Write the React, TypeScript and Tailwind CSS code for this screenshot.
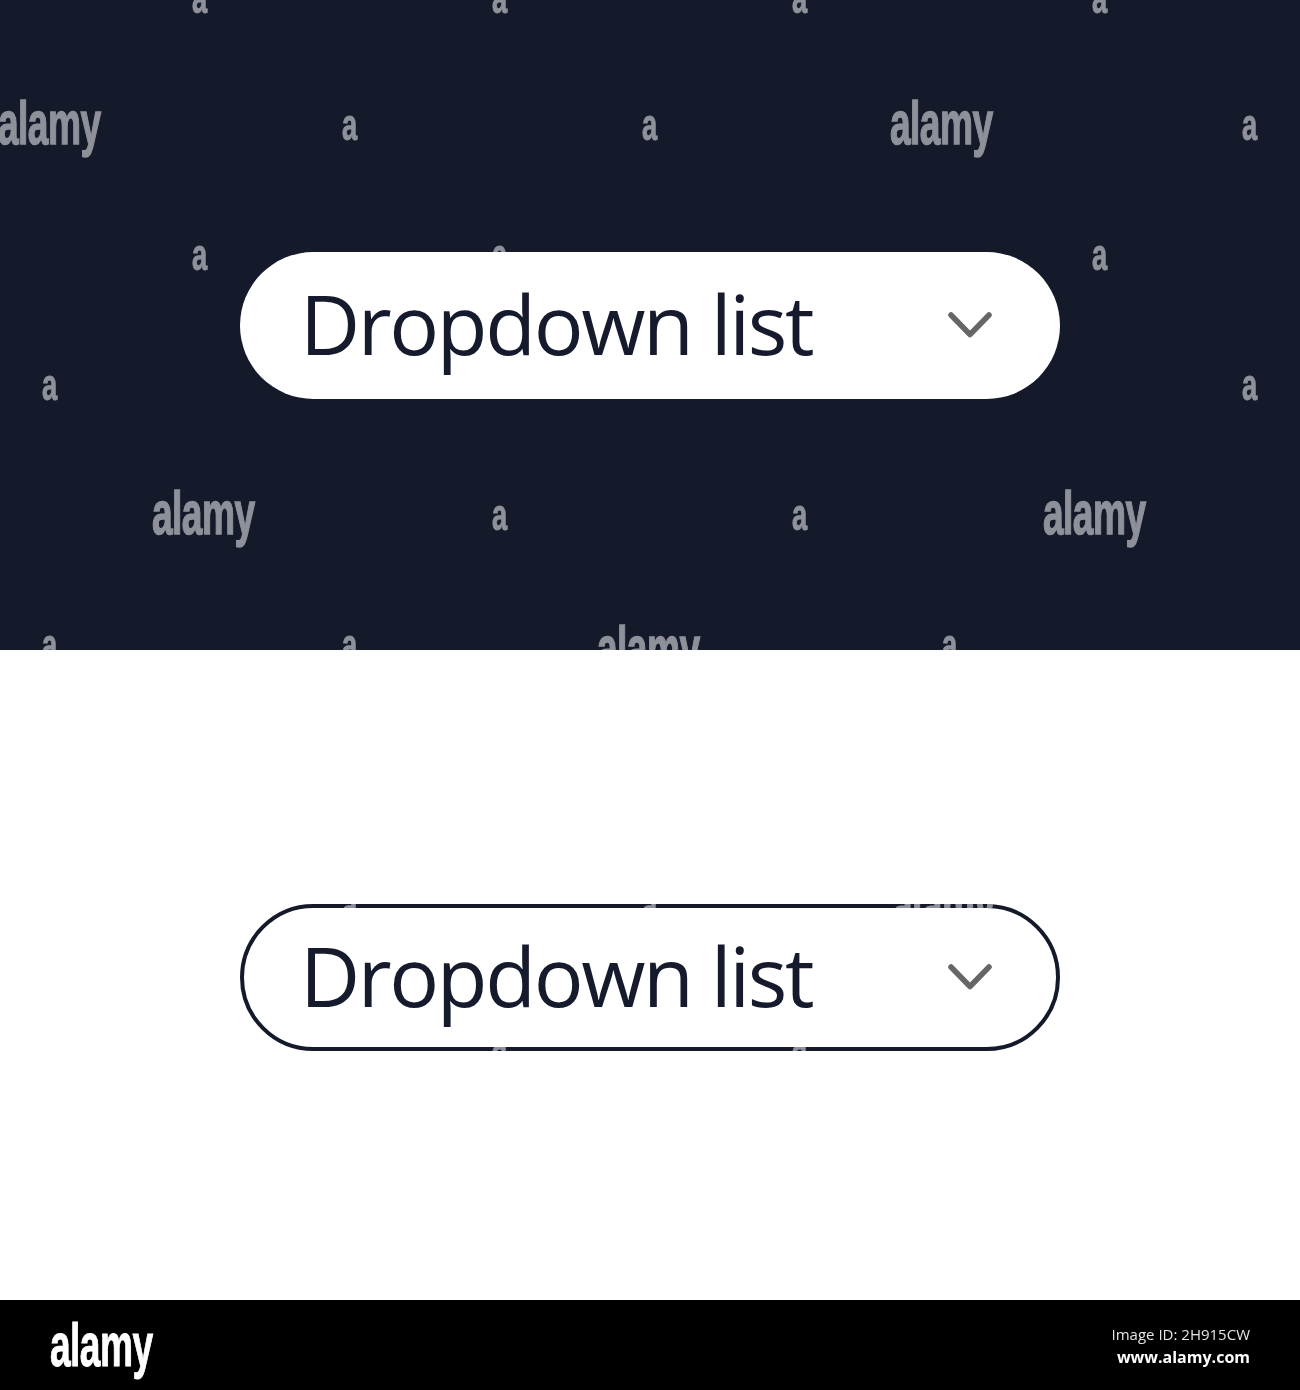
const navy = "#151a2b";

// scattered stock-photo marks; the overlay uses lighten so they vanish on white
const smallMarks: [number, number][] = [
  [192, -24], [492, -24], [792, -24], [1092, -24],
  [342, 103], [642, 103], [1242, 103],
  [192, 233], [492, 233], [1092, 233],
  [42, 363], [1242, 363],
  [492, 493], [792, 493],
  [42, 623], [342, 623], [942, 623],
  [342, 883], [642, 883],
  [492, 1023], [792, 1023],
];

const bigMarks: [number, number][] = [
  [-2, 92],
  [890, 92],
  [152, 482],
  [1043, 482],
  [597, 617],
  [892, 874],
];

function Chevron() {
  return (
    <svg width="48" height="30" viewBox="0 0 48 30" fill="none" className="shrink-0">
      <path
        d="M5 5 L24 24.5 L43 5"
        stroke="#666666"
        strokeWidth="5.5"
        strokeLinecap="round"
        strokeLinejoin="round"
      />
    </svg>
  );
}

function Pill({ outlined }: { outlined?: boolean }) {
  return (
    <div
      className={
        "flex h-[147px] w-[820px] items-center justify-between rounded-full bg-white " +
        (outlined
          ? "mt-[4px] border-[4px] border-[#151a2b] pl-[56px] pr-[62px]"
          : "pl-[60px] pr-[66px]")
      }
    >
      <span
        className="pb-[6px] text-[83px] leading-none tracking-[-2.4px] text-[#151a2c]"
        style={{ fontFamily: '"Open Sans", "Noto Sans", sans-serif' }}
      >
        Dropdown list
      </span>
      <Chevron />
    </div>
  );
}

export default function App() {
  return (
    <div className="relative h-[1390px] w-[1300px] overflow-hidden">
      <section className="flex h-[650px] items-center justify-center" style={{ background: navy }}>
        <Pill />
      </section>
      <section className="flex h-[650px] items-center justify-center bg-white">
        <Pill outlined />
      </section>
      <footer className="flex h-[90px] items-center justify-between bg-black pl-[50px] pr-[50px]">
        <span
          className="inline-block origin-left scale-x-[0.6] text-[62px] font-bold leading-none tracking-[-1px] text-white [-webkit-text-stroke:1px_white]"
          style={{ fontFamily: '"Liberation Sans", Arial, sans-serif' }}
        >
          alamy
        </span>
        <div
          className="flex flex-col items-end gap-[5px] text-white"
          style={{ fontFamily: '"Open Sans", "Noto Sans", sans-serif' }}
        >
          <span className="text-[15px] leading-[18px] text-[#e5e5e5]">Image ID: 2H915CW</span>
          <span className="text-[16px] font-bold leading-[18px]">www.alamy.com</span>
        </div>
      </footer>

      <div
        className="pointer-events-none absolute inset-0 mix-blend-lighten text-[#8e919a]"
        style={{ fontFamily: '"Liberation Sans", Arial, sans-serif' }}
      >
        {smallMarks.map(([x, y], i) => (
          <span
            key={"s" + i}
            className="absolute inline-block origin-top-left scale-x-[0.62] text-[44px] font-bold leading-none [-webkit-text-stroke:1px_#8e919a]"
            style={{ left: x, top: y }}
          >
            a
          </span>
        ))}
        {bigMarks.map(([x, y], i) => (
          <span
            key={"b" + i}
            className="absolute inline-block origin-top-left scale-x-[0.6] text-[62px] font-bold leading-none tracking-[-1px] [-webkit-text-stroke:1.5px_#8e919a]"
            style={{ left: x, top: y }}
          >
            alamy
          </span>
        ))}
      </div>
    </div>
  );
}
